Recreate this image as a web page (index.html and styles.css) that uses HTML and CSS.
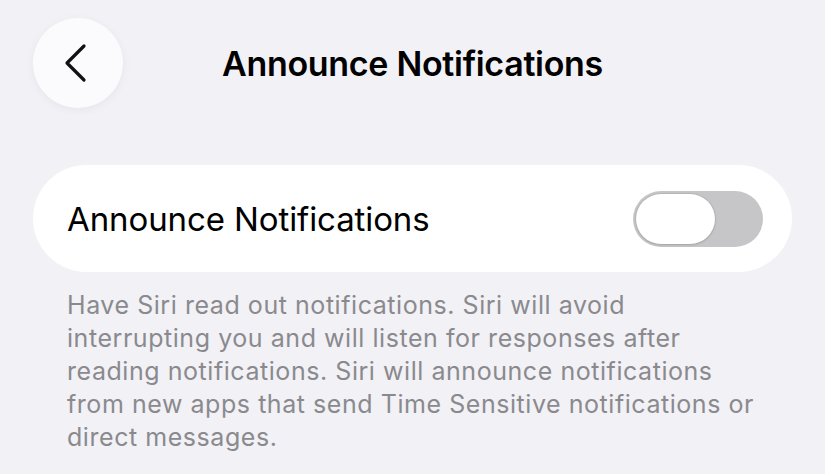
FILE: index.html
```html
<!DOCTYPE html>
<html lang="en">
<head>
    <meta charset="UTF-8">
    <meta name="viewport" content="width=device-width, initial-scale=1.0">
    <title>Announce Notifications</title>
    <link rel="stylesheet" href="styles.css">
</head>
<body>
    <!-- top bar -->
    <div class="navbar">
        <button class="back-btn" aria-label="Back">
            <svg width="24" height="40" viewBox="0 0 24 40">
                <path d="M21 3 L4 20 L21 37" fill="none" stroke="#111" stroke-width="3.2" stroke-linecap="round" stroke-linejoin="round"/>
            </svg>
        </button>
        <div class="nav-title">Announce Notifications</div>
        <div class="nav-spacer"></div>
    </div>

    <!-- settings group -->
    <div class="content">
        <div class="card">
            <span class="row-label">Announce Notifications</span>
            <div class="toggle">
                <div class="knob"></div>
            </div>
        </div>
        <p class="footnote">Have Siri read out notifications. Siri will avoid interrupting you and will listen for responses after reading notifications. Siri will announce notifications from new apps that send Time Sensitive notifications or direct messages.</p>
    </div>
</body>
</html>
```

FILE: styles.css
```css
body, html {
    margin: 0;
    padding: 0;
    background-color: #f2f1f6;
    font-family: Inter, "Noto Sans", sans-serif;
    overflow: hidden;
}

/* top bar */
.navbar {
    display: flex;
    align-items: center;
    padding: 18px 33px 0 33px;
    height: 90px;
}

.back-btn {
    width: 90px;
    height: 90px;
    border-radius: 50%;
    border: none;
    background-color: #fbfbfd;
    box-shadow: 0 2px 10px rgba(0, 0, 0, 0.05);
    display: flex;
    align-items: center;
    justify-content: center;
    padding: 0 6px 0 0;
    flex-shrink: 0;
}

.nav-title {
    flex: 1;
    text-align: center;
    font-size: 34px;
    font-weight: 600;
    color: #000;
    letter-spacing: -0.3px;
}

.nav-spacer {
    width: 90px;
    flex-shrink: 0;
}

/* settings group */
.content {
    padding: 57px 33px 0 33px;
}

.card {
    background-color: #fff;
    border-radius: 54px;
    height: 107px;
    display: flex;
    align-items: center;
    justify-content: space-between;
    padding: 0 29px 0 34px;
}

.row-label {
    font-size: 33px;
    color: #000;
    letter-spacing: -0.1px;
}

.toggle {
    width: 130px;
    height: 56px;
    border-radius: 28px;
    background-color: #c6c6c8;
    display: flex;
    align-items: center;
    padding-left: 3px;
    box-sizing: border-box;
}

.knob {
    width: 79px;
    height: 50px;
    border-radius: 25px;
    background-color: #fff;
    box-shadow: 0 0 0 1px rgba(0, 0, 0, 0.06), 0 1px 3px rgba(0, 0, 0, 0.12);
}

.footnote {
    margin: 17px 0 0 0;
    padding: 0 34px;
    font-size: 25px;
    line-height: 33px;
    letter-spacing: 0.55px;
    color: #8a8a8e;
}
```
